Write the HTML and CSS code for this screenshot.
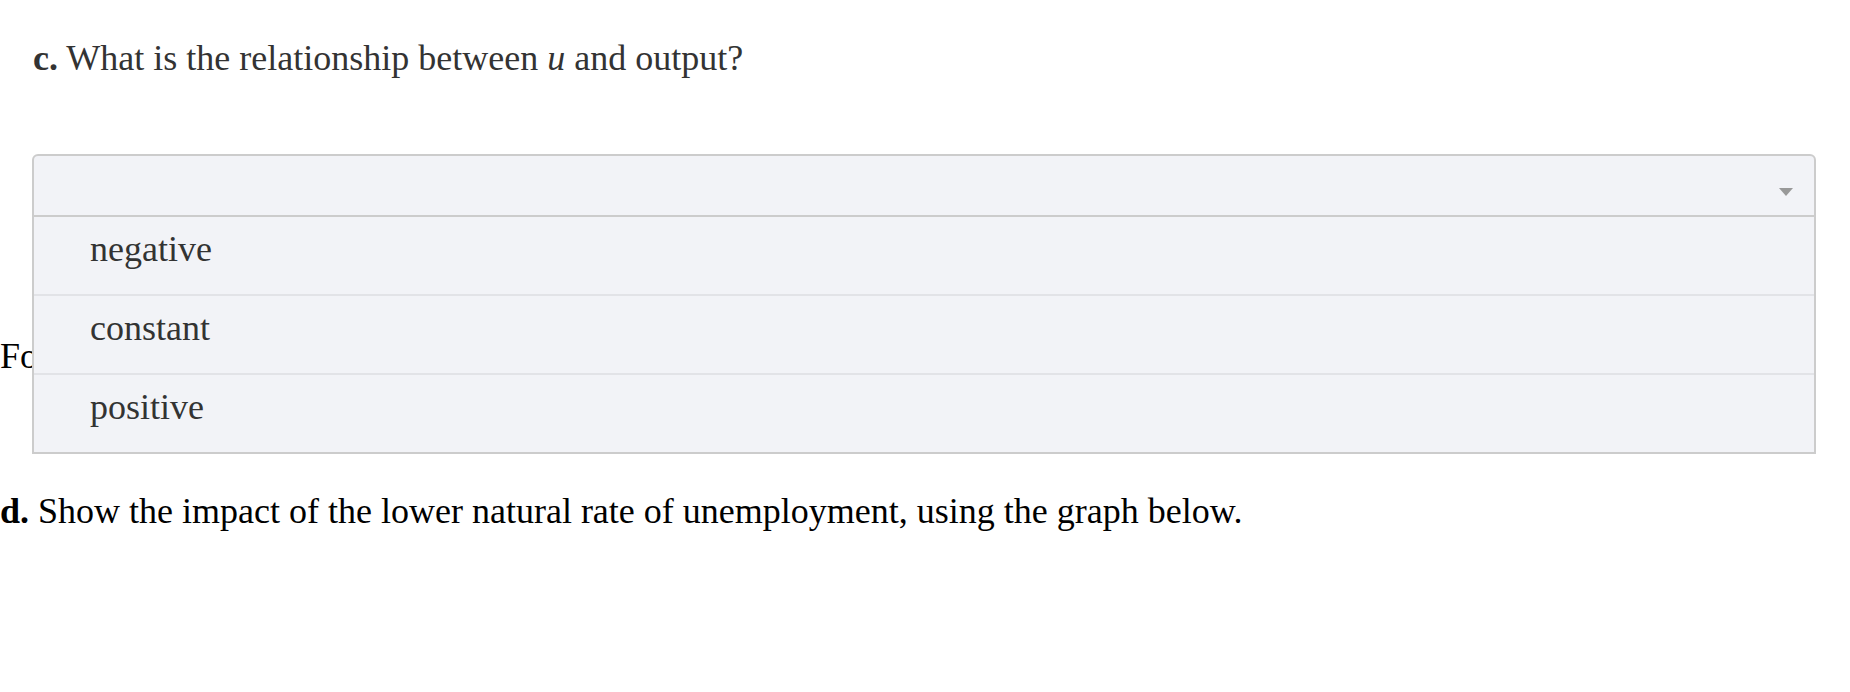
FILE: index.html
```html
<!DOCTYPE html>
<html>
<head>
<meta charset="utf-8">
<link rel="stylesheet" href="styles.css">
</head>
<body>
<div class="page">
  <p class="question"><b>c.</b> What is the relationship between <i>u</i> and output?</p>
  <div class="select">
    <div class="select-head"><span class="arrow"></span></div>
    <ul class="menu">
      <li>negative</li>
      <li>constant</li>
      <li>positive</li>
    </ul>
  </div>
  <p class="hidden-text">Fo</p>
  <p class="part-d"><b>d.</b> Show the impact of the lower natural rate of unemployment, using the graph below.</p>
</div>
</body>
</html>
```
FILE: styles.css
```css
html, body {
  margin: 0;
  padding: 0;
  background: #fff;
}
.page {
  font-family: "Liberation Serif", "Times New Roman", serif;
  padding-top: 38px;
}
.question {
  margin: 0 0 0 33px;
  font-size: 36px;
  line-height: 40px;
  color: #333;
}
.select {
  position: relative;
  margin: 76px 34px 0 32px;
}
.select-head {
  height: 59px;
  background: #f2f3f7;
  border: 2px solid #ccc;
  border-radius: 6px 6px 0 0;
  position: relative;
}
.arrow {
  position: absolute;
  right: 21px;
  top: 32px;
  width: 0;
  height: 0;
  border-left: 7.5px solid transparent;
  border-right: 7.5px solid transparent;
  border-top: 8px solid #999;
}
.menu {
  position: absolute;
  top: 100%;
  left: 0;
  right: 0;
  margin: 0;
  padding: 0;
  list-style: none;
  background: #f2f3f7;
  border: 2px solid #ccc;
  border-top: 0;
  z-index: 2;
}
.menu li {
  height: 77px;
  line-height: 64px;
  padding-left: 56px;
  font-size: 36px;
  color: #333;
  border-bottom: 2px solid #e2e3e7;
}
.menu li:last-child {
  border-bottom: 0;
}
.hidden-text {
  margin: 119px 0 0 0;
  font-size: 36px;
  line-height: 40px;
  color: #000;
  white-space: nowrap;
}
.part-d {
  margin: 115px 0 0 0;
  font-size: 36px;
  line-height: 40px;
  color: #000;
}
```
